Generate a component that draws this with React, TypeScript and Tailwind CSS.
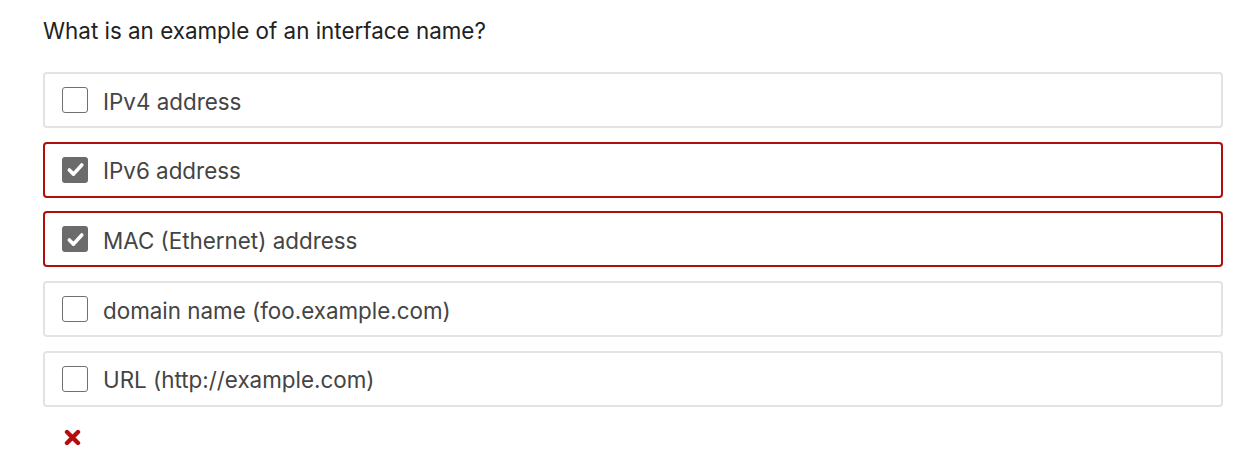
import React from "react";

type Opt = { label: string; checked: boolean };

const options: Opt[] = [
  { label: "IPv4 address", checked: false },
  { label: "IPv6 address", checked: true },
  { label: "MAC (Ethernet) address", checked: true },
  { label: "domain name (foo.example.com)", checked: false },
  { label: "URL (http://example.com)", checked: false },
];

function Box({ checked }: { checked: boolean }) {
  if (checked) {
    return (
      <span className="flex h-[26px] w-[26px] shrink-0 items-center justify-center rounded-[3px] bg-[#6b6b6b]">
        <svg width="19" height="19" viewBox="0 0 16 16">
          <path d="M2.8 8.4 L6.3 11.9 L13.3 4.2" fill="none" stroke="#fff" strokeWidth="3" strokeLinecap="round" strokeLinejoin="round" />
        </svg>
      </span>
    );
  }
  return <span className="block h-[26px] w-[26px] shrink-0 rounded-[3px] border-[1.5px] border-[#707070] bg-white" />;
}

export default function App() {
  return (
    <div className="min-h-[453px] bg-white px-[43px] pt-[17px] font-['Inter',sans-serif]">
      <p className="text-[22.4px] leading-[28px] text-[#222]">What is an example of an interface name?</p>
      <div className="mt-[27px] flex w-[1180px] flex-col gap-[13.7px]">
        {options.map((o) => (
          <div
            key={o.label}
            className={`flex h-[56px] items-center gap-[15px] rounded-[4px] border-2 pl-[17px] ${
              o.checked ? "border-[#b30c0c]" : "border-[#e3e3e3]"
            }`}
          >
            <Box checked={o.checked} />
            <span className="pt-[3px] text-[22.4px] leading-[28px] text-[#444]">{o.label}</span>
          </div>
        ))}
      </div>
      <div className="mt-[22px] pl-[21px]">
        <svg width="17" height="17" viewBox="0 0 17 17">
          <path d="M3 3 L14 14 M14 3 L3 14" stroke="#b30c0c" strokeWidth="4.4" strokeLinecap="round" />
        </svg>
      </div>
    </div>
  );
}
